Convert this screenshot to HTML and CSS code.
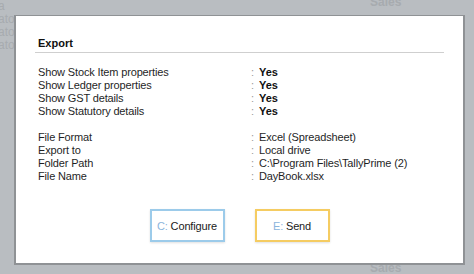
FILE: index.html
```html
<!DOCTYPE html>
<html lang="en">
<head>
  <meta charset="UTF-8" />
  <title>Export</title>
  <link rel="stylesheet" href="styles.css">
</head>
<body>

<!-- screen behind the dialog -->
<div class="backdrop">
  <div class="bg-left">
    <div>a</div>
    <div>ato</div>
    <div>ato</div>
    <div>ato</div>
  </div>
  <div class="bg-sales bg-top">Sales</div>
  <div class="bg-sales bg-bottom">Sales</div>
</div>

<!-- Export dialog -->
<div class="dialog">
  <div class="dialog-title">Export</div>

  <div class="fields">
    <div class="label">Show Stock Item properties</div><div class="colon">:</div><div class="value bold">Yes</div>
    <div class="label">Show Ledger properties</div><div class="colon">:</div><div class="value bold">Yes</div>
    <div class="label">Show GST details</div><div class="colon">:</div><div class="value bold">Yes</div>
    <div class="label">Show Statutory details</div><div class="colon">:</div><div class="value bold">Yes</div>
  </div>

  <div class="fields second">
    <div class="label">File Format</div><div class="colon">:</div><div class="value">Excel (Spreadsheet)</div>
    <div class="label">Export to</div><div class="colon">:</div><div class="value">Local drive</div>
    <div class="label">Folder Path</div><div class="colon">:</div><div class="value">C:\Program Files\TallyPrime (2)</div>
    <div class="label">File Name</div><div class="colon">:</div><div class="value">DayBook.xlsx</div>
  </div>

  <div class="actions">
    <button class="btn btn-configure"><span class="key">C:</span> Configure</button>
    <button class="btn btn-send"><span class="key">E:</span> Send</button>
  </div>
</div>

</body>
</html>
```

FILE: styles.css
```css
body {
  margin: 0;
  width: 474px;
  height: 274px;
  overflow: hidden;
  background-color: #b9bdc1;
  font-family: "Liberation Sans", Arial, sans-serif;
  font-size: 11px;
  color: #1f1f1f;
}

.backdrop {
  position: relative;
  width: 474px;
  height: 274px;
  color: #a7abaf;
}

.bg-left {
  position: absolute;
  top: 0;
  left: -2px;
  font-size: 12px;
  line-height: 13px;
}

.bg-sales {
  position: absolute;
  left: 370px;
  font-weight: bold;
  font-size: 12px;
}

.bg-top { top: -5px; }
.bg-bottom { top: 261px; }

/* dialog floats over the screen */
.dialog {
  position: absolute;
  top: 15px;
  left: 14px;
  width: 451px;
  height: 250px;
  box-sizing: border-box;
  padding: 0 19px;
  background: #ffffff;
  border: 2px solid #8f9295;
  border-top-width: 1px;
}

.dialog-title {
  font-weight: bold;
  line-height: 13px;
  padding: 21px 0 2px 3px;
  border-bottom: 1px solid #cfcfcf;
  color: #111;
}

.fields {
  display: grid;
  grid-template-columns: 213px 8px auto;
  line-height: 13px;
  margin-top: 13px;
  padding-left: 3px;
  letter-spacing: -0.15px;
}

.colon {
  color: #9a9a9a;
}

.bold {
  font-weight: bold;
  color: #111;
  letter-spacing: 0;
}

.actions {
  display: flex;
  justify-content: center;
  gap: 30px;
  margin-top: 26px;
}

.btn {
  width: 75px;
  height: 33px;
  padding: 0;
  background: #ffffff;
  font-family: "Liberation Sans", Arial, sans-serif;
  font-size: 11px;
  letter-spacing: -0.15px;
  color: #1a1a1a;
  border: 2px solid #9ccbea;
  box-shadow: 0 1px 2px rgba(0,0,0,0.12);
  cursor: pointer;
}

.btn-send {
  border-color: #f5cc62;
}

.key {
  color: #8bb4dc;
}
```
